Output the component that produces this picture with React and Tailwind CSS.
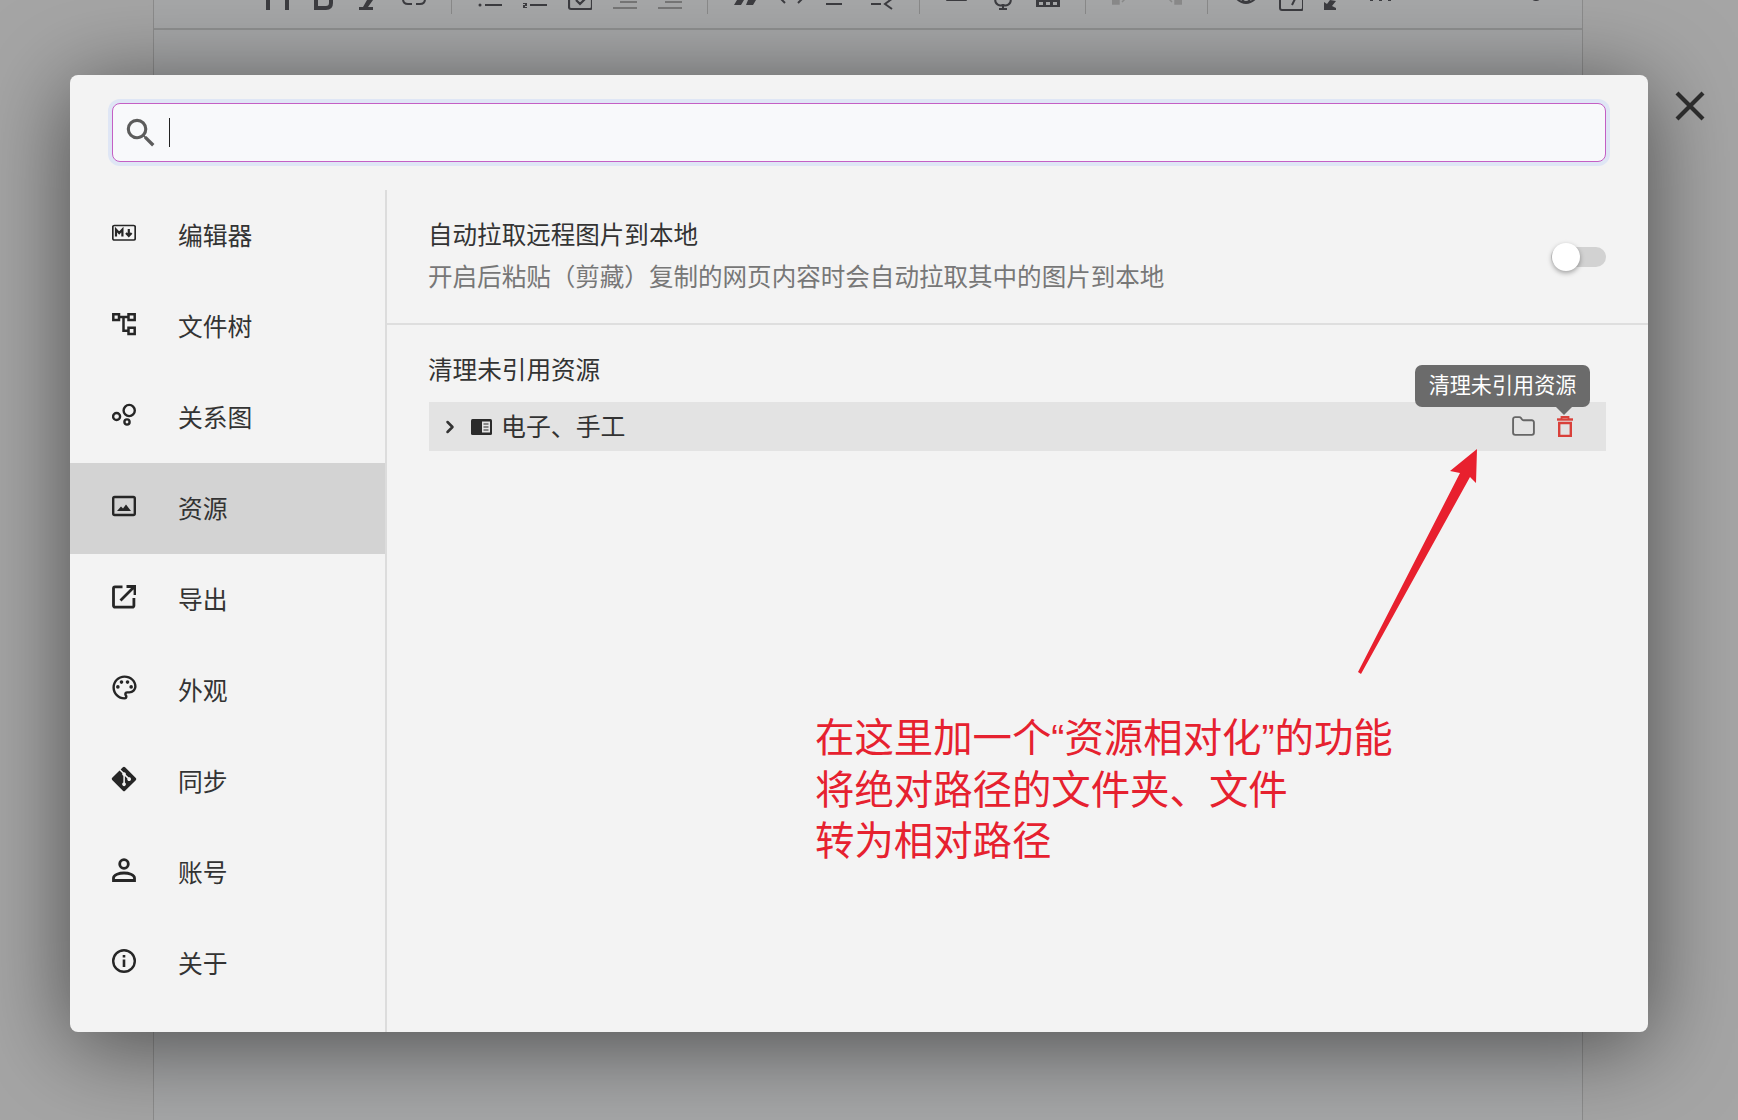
// Settings dialog (image page) over a dimmed editor, with a red annotation
import { MdOutlinePalette, MdSearch } from "react-icons/md";
import { FaGitAlt } from "react-icons/fa";
import { ChevronRight, Folder } from "lucide-react";

// toolbar glyphs are cut by the top of the window, so y=0 is the page top
const toolIcons = {
  h: <path d="M0 0h4v10H0zM19 0h4v10h-4z" fill="currentColor" />,
  b: <path d="M5 -2V8H15Q20 8 20 3V-2" fill="none" stroke="currentColor" strokeWidth="4" />,
  i: <path d="M3 7h14v3H3zM7 7l4-7h6l-5 7z" fill="currentColor" />,
  link: <path d="M1 -1C1 3 3 4 6 4H10M14 4H18C21 4 23 3 23 -1" fill="none" stroke="currentColor" strokeWidth="2" />,
  ul: <path d="M2 3.500a1.500 1.500 0 1 1 0 3a1.500 1.500 0 1 1 0-3zM7 4h17v2H7z" fill="currentColor" />,
  ol: <path d="M0 3h4v3H2v1h2v1H0V5h2V4H0zM7 4h17v2H7z" fill="currentColor" />,
  task: <path d="M1 -2V7Q1 9 3 9H22Q24 9 24 7V-2M8 0L12 4L17 -1" fill="none" stroke="currentColor" strokeWidth="2.200" />,
  indent: <path d="M7 2H24M0 8H24" fill="none" stroke="#767676" strokeWidth="2" />,
  outdent: <path d="M7 2H25M0 8H25" fill="none" stroke="#767676" strokeWidth="2" />,
  quote: <path d="M3 0h7l-3 5H0zM14 0h8l-3 5h-7z" fill="currentColor" />,
  code: <path d="M1 -1L5 3M22 -1L18 3" fill="none" stroke="currentColor" strokeWidth="2" />,
  hr: <path d="M1 4H17" fill="none" stroke="currentColor" strokeWidth="2" />,
  mind: <path d="M1 4H11M23 -2L15 4L22 9" fill="none" stroke="currentColor" strokeWidth="2" />,
  image: <path d="M0 -3h21v3q0 1-1 1H1q-1 0-1-1z" fill="currentColor" />,
  pin: <path d="M12 -5a5.500 5.500 0 1 1 0 10a5.500 5.500 0 1 1 0-10zM12 5V9M8 9H16" fill="none" stroke="currentColor" strokeWidth="2" />,
  table: <path d="M0 0H24V7H0zM3 2V5H7V2zM10 2V5H14V2zM17 2V5H21V2z" fill="currentColor" fillRule="evenodd" />,
  undo: <path d="M0 0H7V4H0zM13 -1L10 2" fill="#8a8a8a" stroke="#8a8a8a" strokeWidth="1.500" />,
  redo: <path d="M17 0H24V4H17zM11 -1L14 2" fill="#8a8a8a" stroke="#8a8a8a" strokeWidth="1.500" />,
  eye: <path d="M1 -3Q12 9 23 -3M8 -2a4 4 0 0 0 8 0" fill="none" stroke="currentColor" strokeWidth="2" />,
  share: <path d="M1 -2V8Q1 10 3 10H22Q24 10 24 8V-2M13 5L16 -1" fill="none" stroke="currentColor" strokeWidth="2" />,
  fold: <path d="M0 10V2L3 4L6 0L12 1L8 6L12 8V10z" fill="currentColor" />,
  more: <path d="M1 -1h3v2H1zM10 -1h3v2h-3zM19 -1h3v2h-3z" fill="currentColor" />,
};

// null means a separator between two groups
const toolbar = ["h", "b", "i", "link", null, "ul", "ol", "task", "indent", "outdent", null, "quote", "code", "hr", "mind", null, "image", "pin", "table", null, "undo", "redo", null, "eye", "share", "fold", "more"];

function Toolbar() {
  return (
    <div className="flex h-[30px] shrink-0 overflow-hidden border-b-2 border-[#8f9090] pl-[91px] text-[#3c3c40]">
      {toolbar.map((name, i) =>
        name ? (
          <svg key={i} viewBox="0 0 24 28" className="ml-[21.150px] h-[28px] w-6 shrink-0">
            {toolIcons[name]}
          </svg>
        ) : (
          <span key={i} className="ml-[25px] mr-[5px] h-[14px] w-px shrink-0 bg-[#8a8a8a]" />
        )
      )}
      <span className="ml-[138px] -mt-[8px] h-[9px] w-[10px] rounded-full bg-[#3c3c40]" />
    </div>
  );
}

function IconMarkdown() {
  return (
    <svg viewBox="0 0 24 24" className="h-6 w-6">
      <rect x="0.800" y="4.500" width="22.400" height="14.500" rx="1.500" fill="none" stroke="currentColor" strokeWidth="1.700" />
      <path d="M4 15.500V8.500L7.200 12L10.400 8.500V15.500M16.800 8V14.500M14 12L16.800 15L19.600 12" fill="none" stroke="currentColor" strokeWidth="2.200" />
    </svg>
  );
}

function IconTree() {
  return (
    <svg viewBox="0 0 24 24" className="h-6 w-6" fill="none" stroke="currentColor" strokeWidth="2.500">
      <path d="M1.300 2.200h5.700v5.700H1.300zM16.500 2.200h6.200v5.700h-6.200zM16.500 15.800h6.200v6.200h-6.200zM7 5H16.500M11.500 5V18.800H16.500" />
    </svg>
  );
}

function IconGraph() {
  return (
    <svg viewBox="0 0 24 24" className="h-6 w-6" fill="none" stroke="currentColor" strokeWidth="2.400">
      <circle cx="17.200" cy="7.500" r="5.600" />
      <circle cx="4.600" cy="13.500" r="3.500" />
      <circle cx="15" cy="19" r="2.600" />
    </svg>
  );
}

function IconImage() {
  return (
    <svg viewBox="0 0 24 24" className="h-6 w-6">
      <rect x="1.200" y="3" width="21.600" height="18" rx="1.500" fill="none" stroke="currentColor" strokeWidth="2.400" />
      <path d="M5 17L9 12.500L11 14.500L14 10.500L19 17z" fill="currentColor" />
    </svg>
  );
}

function IconExport() {
  return (
    <svg viewBox="0 0 24 24" className="h-6 w-6" fill="none" stroke="currentColor" strokeWidth="2.800">
      <path d="M10.500 1.800H3a1.500 1.500 0 0 0-1.500 1.500v17.400A1.500 1.500 0 0 0 3 22.200h17.400a1.500 1.500 0 0 0 1.500-1.500V13" />
      <path d="M8.500 15.500L22 2M14.500 1.500H23V10" />
    </svg>
  );
}

function IconUser() {
  return (
    <svg viewBox="0 0 24 24" className="h-6 w-6" fill="none" stroke="currentColor" strokeWidth="2.800">
      <circle cx="12" cy="6" r="4.300" />
      <path d="M1.500 22.500V20C1.500 16.500 7.500 15 12 15S22.500 16.500 22.500 20V22.500z" />
    </svg>
  );
}

function IconInfo() {
  return (
    <svg viewBox="0 0 24 24" className="h-6 w-6" fill="none" stroke="currentColor" strokeWidth="2.400">
      <circle cx="12" cy="12" r="10.800" />
      <path d="M12 10.500V18M12 6V8.500" strokeWidth="2.600" />
    </svg>
  );
}

const navItems = [
  { label: "编辑器", icon: <IconMarkdown /> },
  { label: "文件树", icon: <IconTree /> },
  { label: "关系图", icon: <IconGraph /> },
  { label: "资源", icon: <IconImage />, active: true },
  { label: "导出", icon: <IconExport /> },
  { label: "外观", icon: <MdOutlinePalette className="-m-[2.500px] h-[29px] w-[29px]" /> },
  { label: "同步", icon: <FaGitAlt className="-m-[2px] h-[28px] w-[28px]" /> },
  { label: "账号", icon: <IconUser /> },
  { label: "关于", icon: <IconInfo /> },
];

function Sidebar() {
  return (
    <nav className="w-[317px] shrink-0 border-r-2 border-[#dcdcdc]">
      {navItems.map((item) => (
        <div
          key={item.label}
          className={`flex h-[91px] items-center pl-[42px] text-[24.800px] text-[#333] ${item.active ? "bg-[#d3d3d3]" : ""}`}
        >
          <span className="-mt-[6px] w-6 shrink-0 text-[#262626]">{item.icon}</span>
          <span className="ml-[42px] mt-[2px]">{item.label}</span>
        </div>
      ))}
    </nav>
  );
}

function Toggle() {
  return (
    <div className="relative h-5 w-[55px] rounded-full bg-[#d2d2d2]">
      <span className="absolute left-[1px] -top-1 h-7 w-7 rounded-full bg-white shadow-[0_2px_5px_rgba(0,0,0,0.35)]" />
    </div>
  );
}

function ResourceRow() {
  return (
    <div className="relative flex h-[49px] items-center bg-[#e3e3e3] pl-[11px] pr-[33px] text-[24.900px] text-[#333]">
      <ChevronRight size={20} strokeWidth={3} className="text-[#333]" />
      <svg viewBox="0 0 21 16" className="ml-[11px] h-4 w-[21px]">
        <rect width="21" height="16" rx="1.500" fill="#2b2b2b" />
        <path d="M11 2.500H19V13.500H11z" fill="#e3e3e3" />
        <path d="M12.500 5H17.500M12.500 8H17.500M12.500 11H17.500" stroke="#2b2b2b" strokeWidth="1.200" />
      </svg>
      <span className="ml-[9px] mt-[2px]">电子、手工</span>
      <Folder size={25} strokeWidth={1.800} className="ml-auto text-[#666]" />
      <svg viewBox="0 0 16 21" className="ml-[21px] h-[21px] w-4" fill="none" stroke="#d9403a" strokeWidth="2.400">
        <path d="M0 3.500H16" />
        <path d="M4.500 3V1H11.500V3" strokeWidth="1.800" />
        <path d="M2.200 7H13.800V20H2.200z" />
      </svg>

      {/* hover tooltip of the trash button */}
      <div className="absolute right-[16px] -top-[37px] flex h-[42px] w-[175px] items-center justify-center rounded-[7px] bg-[#6b6b6b] text-[21.100px] text-white">
        清理未引用资源
        <span className="absolute -bottom-[8px] right-[18px] h-0 w-0 border-x-[8px] border-t-[8px] border-x-transparent border-t-[#6b6b6b]" />
      </div>
    </div>
  );
}

function Annotation() {
  return (
    <>
      <svg viewBox="0 0 130 235" className="absolute left-[967px] top-[257px] h-[235px] w-[130px]">
        <path d="M123 2L122 36L116 30L7 227L4 225L106 26L96 24z" fill="#e8202e" />
      </svg>
      <div className="absolute left-[428px] top-[523px] whitespace-nowrap text-[39.400px] leading-[51.500px] text-[#e6212f]">
        <p>在这里加一个“资源相对化”的功能</p>
        <p>将绝对路径的文件夹、文件</p>
        <p>转为相对路径</p>
      </div>
    </>
  );
}

export default function App() {
  return (
    <div
      lang="zh-CN"
      className="relative h-screen w-full overflow-hidden bg-[#a5a5a5] font-['Liberation_Sans','Noto_Sans_CJK_SC',sans-serif]"
    >
      {/* editor behind the dialog */}
      <div className="ml-[153px] flex h-full w-[1430px] flex-col border-x border-[#8c8c8c] bg-[#a6a7a8]">
        <Toolbar />
      </div>

      {/* dialog */}
      <div className="absolute left-[70px] top-[75px] flex h-[957px] w-[1578px] flex-col rounded-lg bg-[#f3f3f3] shadow-[0_12px_90px_rgba(0,0,0,0.55)]">
        <div className="h-[115px] shrink-0 px-[42px] pt-[28px]">
          <div className="flex h-[59px] items-center rounded-lg border-[1.500px] border-[#c45fc4] bg-[#f8f9fb] pl-[9px] ring-[4px] ring-[#dfe6f5]">
            <MdSearch size={38} className="text-[#5c5c5c]" />
            <span className="ml-[9px] h-[29px] w-px bg-[#222]" />
          </div>
        </div>

        <div className="flex min-h-0 flex-1">
          <Sidebar />
          <div className="relative flex-1">
            <section className="flex h-[135px] items-center justify-between border-b-2 border-[#dedede] pl-[41px] pr-[42px] text-[24.550px] leading-[42px]">
              <div>
                <p className="text-[#333]">自动拉取远程图片到本地</p>
                <p className="text-[#777]">开启后粘贴（剪藏）复制的网页内容时会自动拉取其中的图片到本地</p>
              </div>
              <Toggle />
            </section>
            <section className="pl-[42px] pr-[42px] pt-[25px]">
              <p className="-ml-px mb-[10px] text-[24.600px] leading-[42px] text-[#333]">清理未引用资源</p>
              <ResourceRow />
            </section>
            <Annotation />
          </div>
        </div>
      </div>

      {/* close */}
      <button className="absolute left-[1674px] top-[90px] text-[#2c2c2c]">
        <svg viewBox="0 0 32 32" className="h-8 w-8" fill="none" stroke="currentColor" strokeWidth="4.200">
          <path d="M3 3L29 29M29 3L3 29" />
        </svg>
      </button>
    </div>
  );
}
